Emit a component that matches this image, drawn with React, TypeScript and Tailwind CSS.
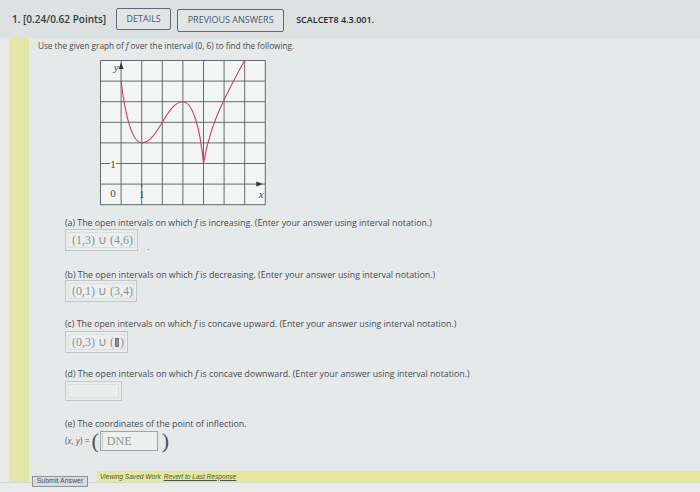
import React from "react";

const C = 20.6;
const OX = 0.5 + C;
const OY = 0.5 + 6 * C;
const px = (x: number) => (OX + x * C).toFixed(2);
const py = (y: number) => (OY - y * C).toFixed(2);
const P = (x: number, y: number) => `${px(x)} ${py(y)}`;

function Graph() {
  const vlines = Array.from({ length: 9 }, (_, i) => 0.5 + i * C);
  const hlines = Array.from({ length: 8 }, (_, i) => 0.5 + i * C);
  const d = [
    `M ${P(0, 5)}`,
    `C ${P(0.2, 3.3)} ${P(0.55, 2)} ${P(1, 2)}`,
    `C ${P(1.4, 2)} ${P(1.7, 2.5)} ${P(2, 3)}`,
    `C ${P(2.35, 3.6)} ${P(2.65, 4)} ${P(3, 4)}`,
    `C ${P(3.5, 4)} ${P(3.85, 2.6)} ${P(4, 1)}`,
    `C ${P(4.2, 2.2)} ${P(4.6, 3.3)} ${P(5, 4.1)}`,
    `C ${P(5.4, 4.9)} ${P(5.7, 5.5)} ${P(6, 6)}`,
  ].join(" ");
  return (
    <svg width="166" height="146" viewBox="0 0 166 146" className="block">
      <rect x="0.5" y="0.5" width={8 * C} height={7 * C} fill="#f3f4f4" />
      {vlines.map((x, i) => (
        <line key={"v" + i} x1={x} y1={0.5} x2={x} y2={0.5 + 7 * C} stroke="#555b5e" strokeWidth="0.9" />
      ))}
      {hlines.map((y, i) => (
        <line key={"h" + i} x1={0.5} y1={y} x2={0.5 + 8 * C} y2={y} stroke="#555b5e" strokeWidth="0.9" />
      ))}
      <polygon points={`${OX - 2.5},9 ${OX + 2.5},9 ${OX},2.5`} fill="#333" />
      <polygon points={`${0.5 + 8 * C - 9},${OY - 2.5} ${0.5 + 8 * C - 9},${OY + 2.5} ${0.5 + 8 * C - 2.5},${OY}`} fill="#333" />
      <rect x={OX - 11} y={OY - C - 5} width="6" height="10" fill="#f3f4f4" />
      <text x={OX - 8} y={OY - C + 4} textAnchor="middle" fontFamily="'Liberation Serif', serif" fontSize="11" fill="#444">1</text>
      <text x={OX - 8} y={OY + 13} textAnchor="middle" fontFamily="'Liberation Serif', serif" fontSize="11" fill="#444">0</text>
      <line x1={OX + C} y1={OY} x2={OX + C} y2={OY + 3} stroke="#444" strokeWidth="1" />
      <text x={OX + C} y={OY + 14} textAnchor="middle" fontFamily="'Liberation Serif', serif" fontSize="11" fill="#444">1</text>
      <text x={OX - 5} y="11" textAnchor="middle" fontFamily="'Liberation Serif', serif" fontStyle="italic" fontSize="11" fill="#444">y</text>
      <text x={0.5 + 8 * C - 4} y={OY + 14} textAnchor="middle" fontFamily="'Liberation Serif', serif" fontStyle="italic" fontSize="11" fill="#444">x</text>
      <path d={d} fill="none" stroke="#c8406a" strokeWidth="1.1" strokeLinejoin="round" />
    </svg>
  );
}

function Question({ children }: { children: React.ReactNode }) {
  return <div className="text-[8.8px] leading-[10px] text-[#464a4d] whitespace-nowrap">{children}</div>;
}

function Fi() {
  return <span className="italic">f</span>;
}

function AnswerBox({ w, h, children }: { w: string; h: string; children?: React.ReactNode }) {
  return (
    <div className={`${w} ${h} border border-[#c3c7c8] bg-[#e9ecec] p-[2px]`}>
      <div className="w-full h-full border border-[#dcdfe0] bg-[#eceeee] flex items-center pl-[3px] font-['Liberation_Serif',serif] text-[12px] text-[#8b9194] whitespace-nowrap">
        {children}
      </div>
    </div>
  );
}

export default function App() {
  return (
    <div className="w-[700px] h-[492px] overflow-hidden bg-[#e6e9e9] font-['Open_Sans',sans-serif] flex flex-col">
      {/* header */}
      <div className="h-[38px] bg-[#dee1e1] flex items-center pl-[12px] shrink-0">
        <span className="text-[10px] font-semibold text-[#333a3e] whitespace-nowrap">1. [0.24/0.62 Points]</span>
        <div className="ml-[10px] w-[55px] h-[22px] border border-[#5d6b78] rounded-[2px] bg-[#e2e5e6] flex items-center justify-center text-[9px] text-[#46576a]">
          DETAILS
        </div>
        <div className="ml-[6px] mt-[2px] w-[107px] h-[23px] border border-[#5d6b78] rounded-[2px] bg-[#e2e5e6] flex items-center justify-center text-[9px] text-[#46576a] whitespace-nowrap">
          PREVIOUS ANSWERS
        </div>
        <span className="ml-[12px] mt-[2px] text-[9px] font-semibold text-[#24292c] whitespace-nowrap">SCALCET8 4.3.001.</span>
      </div>

      {/* body */}
      <div className="flex h-[444px] shrink-0">
        <div className="w-[9px] bg-[#e8eaea]" />
        <div className="w-[20px] bg-[#e4e6a8]" />
        <div className="flex-1 flex flex-col bg-[#e6e9ea]">
          <div className="ml-[9px] mt-[3px] text-[8.2px] leading-[10px] text-[#464a4d] whitespace-nowrap">
            Use the given graph of <Fi /> over the interval (0, 6) to find the following.
          </div>
          <div className="ml-[71px] mt-[9px]">
            <Graph />
          </div>

          <div className="ml-[36px] flex flex-col">
            <div className="mt-[12px]">
              <Question>
                (a) The open intervals on which <Fi /> is increasing. (Enter your answer using interval notation.)
              </Question>
            </div>
            <div className="mt-[1px] flex items-end">
              <AnswerBox w="w-[73px]" h="h-[22px]">(1,3) ∪ (4,6)</AnswerBox>
              <span className="ml-[10px] mb-[1px] w-[1px] h-[1px] bg-[#888]" />
            </div>

            <div className="mt-[19px]">
              <Question>
                (b) The open intervals on which <Fi /> is decreasing. (Enter your answer using interval notation.)
              </Question>
            </div>
            <div className="mt-[0px]">
              <AnswerBox w="w-[72px]" h="h-[22px]">(0,1) ∪ (3,4)</AnswerBox>
            </div>

            <div className="mt-[17px]">
              <Question>
                (c) The open intervals on which <Fi /> is concave upward. (Enter your answer using interval notation.)
              </Question>
            </div>
            <div className="mt-[2px]">
              <AnswerBox w="w-[63px]" h="h-[22px]">
                (0,3) ∪ (<span className="inline-block w-[4px] h-[9px] bg-[#8e9396] border border-[#6c7275] mx-[1px]" />)
              </AnswerBox>
            </div>

            <div className="mt-[16px]">
              <Question>
                (d) The open intervals on which <Fi /> is concave downward. (Enter your answer using interval notation.)
              </Question>
            </div>
            <div className="mt-[2px]">
              <AnswerBox w="w-[57px]" h="h-[20px]" />
            </div>

            <div className="mt-[18px]">
              <Question>(e) The coordinates of the point of inflection.</Question>
            </div>
            <div className="mt-[2px] flex items-center h-[20px]">
              <span className="text-[8.5px] text-[#5a5f62] whitespace-nowrap">
                (<span className="italic">x</span>, <span className="italic">y</span>) =
              </span>
              <span className="ml-[2px] font-['Liberation_Serif',serif] text-[22px] leading-[20px] text-[#4c5154] font-light">(</span>
              <div className="ml-[1px] w-[58px] h-[20px] border border-[#9ea5a8] bg-[#eef0f0] p-[1px]">
                <div className="w-full h-full border-l border-[#c4c9cb] flex items-center pl-[4px] font-['Liberation_Serif',serif] text-[12px] text-[#8b9194]">
                  DNE
                </div>
              </div>
              <span className="ml-[4px] font-['Liberation_Serif',serif] text-[22px] leading-[20px] text-[#4c5154] font-light">)</span>
            </div>
          </div>

          <div className="flex-1" />
          <div className="flex items-start h-[11px]">
            <div className="relative z-10 ml-[3px] mt-[5px] w-[56px] h-[11px] border border-[#8f9597] bg-[#d9dcdc] flex items-center justify-center font-['Liberation_Sans',sans-serif] text-[7px] text-[#4a4f52] whitespace-nowrap">
              Submit Answer
            </div>
            <div className="ml-[9px] flex-1 h-[11px] bg-[#e4e79c] flex items-center pl-[3px] font-['Liberation_Sans',sans-serif] italic text-[6.6px] text-[#51563a] whitespace-nowrap">
              Viewing Saved Work <span className="ml-[3px] underline">Revert to Last Response</span>
            </div>
          </div>
        </div>
      </div>
      <div className="flex-1 bg-[#e9ebeb] border-t border-[#d5d8d8]" />
    </div>
  );
}
